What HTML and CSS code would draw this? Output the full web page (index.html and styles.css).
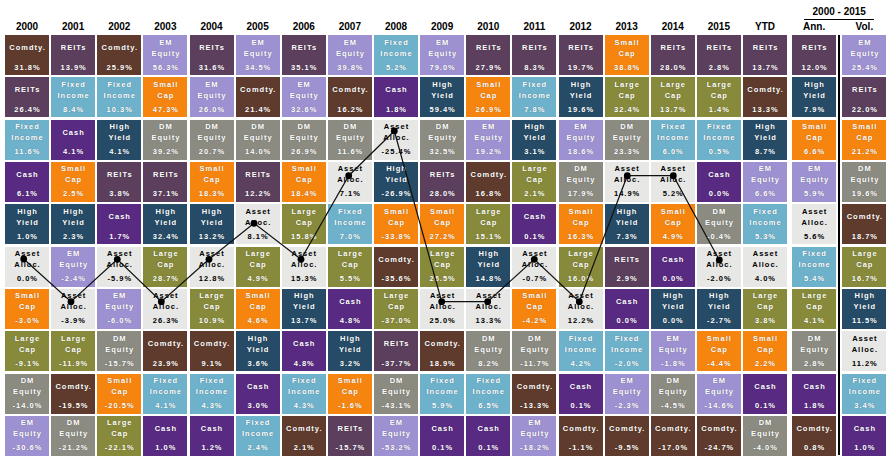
FILE: index.html
```html
<!DOCTYPE html>
<html>
<head>
<meta charset="utf-8">
<link rel="stylesheet" href="styles.css">
</head>
<body>
<div class="page">
  <div class="col"><div class="yr">2000</div>
    <div class="cell cm"><div class="lbl"><span>Comdty.</span></div><div class="pct">31.8%</div></div>
    <div class="cell re"><div class="lbl"><span>REITs</span></div><div class="pct">26.4%</div></div>
    <div class="cell fi"><div class="lbl"><span>Fixed<br>Income</span></div><div class="pct">11.6%</div></div>
    <div class="cell ca"><div class="lbl"><span>Cash</span></div><div class="pct">6.1%</div></div>
    <div class="cell hy"><div class="lbl"><span>High<br>Yield</span></div><div class="pct">1.0%</div></div>
    <div class="cell aa"><div class="lbl"><span>Asset<br>Alloc.</span></div><div class="pct">0.0%</div></div>
    <div class="cell sc"><div class="lbl"><span>Small<br>Cap</span></div><div class="pct">-3.0%</div></div>
    <div class="cell lc"><div class="lbl"><span>Large<br>Cap</span></div><div class="pct">-9.1%</div></div>
    <div class="cell dm"><div class="lbl"><span>DM<br>Equity</span></div><div class="pct">-14.0%</div></div>
    <div class="cell em"><div class="lbl"><span>EM<br>Equity</span></div><div class="pct">-30.6%</div></div>
  </div>
  <div class="col"><div class="yr">2001</div>
    <div class="cell re"><div class="lbl"><span>REITs</span></div><div class="pct">13.9%</div></div>
    <div class="cell fi"><div class="lbl"><span>Fixed<br>Income</span></div><div class="pct">8.4%</div></div>
    <div class="cell ca"><div class="lbl"><span>Cash</span></div><div class="pct">4.1%</div></div>
    <div class="cell sc"><div class="lbl"><span>Small<br>Cap</span></div><div class="pct">2.5%</div></div>
    <div class="cell hy"><div class="lbl"><span>High<br>Yield</span></div><div class="pct">2.3%</div></div>
    <div class="cell em"><div class="lbl"><span>EM<br>Equity</span></div><div class="pct">-2.4%</div></div>
    <div class="cell aa"><div class="lbl"><span>Asset<br>Alloc.</span></div><div class="pct">-3.9%</div></div>
    <div class="cell lc"><div class="lbl"><span>Large<br>Cap</span></div><div class="pct">-11.9%</div></div>
    <div class="cell cm"><div class="lbl"><span>Comdty.</span></div><div class="pct">-19.5%</div></div>
    <div class="cell dm"><div class="lbl"><span>DM<br>Equity</span></div><div class="pct">-21.2%</div></div>
  </div>
  <div class="col"><div class="yr">2002</div>
    <div class="cell cm"><div class="lbl"><span>Comdty.</span></div><div class="pct">25.9%</div></div>
    <div class="cell fi"><div class="lbl"><span>Fixed<br>Income</span></div><div class="pct">10.3%</div></div>
    <div class="cell hy"><div class="lbl"><span>High<br>Yield</span></div><div class="pct">4.1%</div></div>
    <div class="cell re"><div class="lbl"><span>REITs</span></div><div class="pct">3.8%</div></div>
    <div class="cell ca"><div class="lbl"><span>Cash</span></div><div class="pct">1.7%</div></div>
    <div class="cell aa"><div class="lbl"><span>Asset<br>Alloc.</span></div><div class="pct">-5.9%</div></div>
    <div class="cell em"><div class="lbl"><span>EM<br>Equity</span></div><div class="pct">-6.0%</div></div>
    <div class="cell dm"><div class="lbl"><span>DM<br>Equity</span></div><div class="pct">-15.7%</div></div>
    <div class="cell sc"><div class="lbl"><span>Small<br>Cap</span></div><div class="pct">-20.5%</div></div>
    <div class="cell lc"><div class="lbl"><span>Large<br>Cap</span></div><div class="pct">-22.1%</div></div>
  </div>
  <div class="col"><div class="yr">2003</div>
    <div class="cell em"><div class="lbl"><span>EM<br>Equity</span></div><div class="pct">56.3%</div></div>
    <div class="cell sc"><div class="lbl"><span>Small<br>Cap</span></div><div class="pct">47.3%</div></div>
    <div class="cell dm"><div class="lbl"><span>DM<br>Equity</span></div><div class="pct">39.2%</div></div>
    <div class="cell re"><div class="lbl"><span>REITs</span></div><div class="pct">37.1%</div></div>
    <div class="cell hy"><div class="lbl"><span>High<br>Yield</span></div><div class="pct">32.4%</div></div>
    <div class="cell lc"><div class="lbl"><span>Large<br>Cap</span></div><div class="pct">28.7%</div></div>
    <div class="cell aa"><div class="lbl"><span>Asset<br>Alloc.</span></div><div class="pct">26.3%</div></div>
    <div class="cell cm"><div class="lbl"><span>Comdty.</span></div><div class="pct">23.9%</div></div>
    <div class="cell fi"><div class="lbl"><span>Fixed<br>Income</span></div><div class="pct">4.1%</div></div>
    <div class="cell ca"><div class="lbl"><span>Cash</span></div><div class="pct">1.0%</div></div>
  </div>
  <div class="col"><div class="yr">2004</div>
    <div class="cell re"><div class="lbl"><span>REITs</span></div><div class="pct">31.6%</div></div>
    <div class="cell em"><div class="lbl"><span>EM<br>Equity</span></div><div class="pct">26.0%</div></div>
    <div class="cell dm"><div class="lbl"><span>DM<br>Equity</span></div><div class="pct">20.7%</div></div>
    <div class="cell sc"><div class="lbl"><span>Small<br>Cap</span></div><div class="pct">18.3%</div></div>
    <div class="cell hy"><div class="lbl"><span>High<br>Yield</span></div><div class="pct">13.2%</div></div>
    <div class="cell aa"><div class="lbl"><span>Asset<br>Alloc.</span></div><div class="pct">12.8%</div></div>
    <div class="cell lc"><div class="lbl"><span>Large<br>Cap</span></div><div class="pct">10.9%</div></div>
    <div class="cell cm"><div class="lbl"><span>Comdty.</span></div><div class="pct">9.1%</div></div>
    <div class="cell fi"><div class="lbl"><span>Fixed<br>Income</span></div><div class="pct">4.3%</div></div>
    <div class="cell ca"><div class="lbl"><span>Cash</span></div><div class="pct">1.2%</div></div>
  </div>
  <div class="col"><div class="yr">2005</div>
    <div class="cell em"><div class="lbl"><span>EM<br>Equity</span></div><div class="pct">34.5%</div></div>
    <div class="cell cm"><div class="lbl"><span>Comdty.</span></div><div class="pct">21.4%</div></div>
    <div class="cell dm"><div class="lbl"><span>DM<br>Equity</span></div><div class="pct">14.0%</div></div>
    <div class="cell re"><div class="lbl"><span>REITs</span></div><div class="pct">12.2%</div></div>
    <div class="cell aa"><div class="lbl"><span>Asset<br>Alloc.</span></div><div class="pct">8.1%</div></div>
    <div class="cell lc"><div class="lbl"><span>Large<br>Cap</span></div><div class="pct">4.9%</div></div>
    <div class="cell sc"><div class="lbl"><span>Small<br>Cap</span></div><div class="pct">4.6%</div></div>
    <div class="cell hy"><div class="lbl"><span>High<br>Yield</span></div><div class="pct">3.6%</div></div>
    <div class="cell ca"><div class="lbl"><span>Cash</span></div><div class="pct">3.0%</div></div>
    <div class="cell fi"><div class="lbl"><span>Fixed<br>Income</span></div><div class="pct">2.4%</div></div>
  </div>
  <div class="col"><div class="yr">2006</div>
    <div class="cell re"><div class="lbl"><span>REITs</span></div><div class="pct">35.1%</div></div>
    <div class="cell em"><div class="lbl"><span>EM<br>Equity</span></div><div class="pct">32.6%</div></div>
    <div class="cell dm"><div class="lbl"><span>DM<br>Equity</span></div><div class="pct">26.9%</div></div>
    <div class="cell sc"><div class="lbl"><span>Small<br>Cap</span></div><div class="pct">18.4%</div></div>
    <div class="cell lc"><div class="lbl"><span>Large<br>Cap</span></div><div class="pct">15.8%</div></div>
    <div class="cell aa"><div class="lbl"><span>Asset<br>Alloc.</span></div><div class="pct">15.3%</div></div>
    <div class="cell hy"><div class="lbl"><span>High<br>Yield</span></div><div class="pct">13.7%</div></div>
    <div class="cell ca"><div class="lbl"><span>Cash</span></div><div class="pct">4.8%</div></div>
    <div class="cell fi"><div class="lbl"><span>Fixed<br>Income</span></div><div class="pct">4.3%</div></div>
    <div class="cell cm"><div class="lbl"><span>Comdty.</span></div><div class="pct">2.1%</div></div>
  </div>
  <div class="col"><div class="yr">2007</div>
    <div class="cell em"><div class="lbl"><span>EM<br>Equity</span></div><div class="pct">39.8%</div></div>
    <div class="cell cm"><div class="lbl"><span>Comdty.</span></div><div class="pct">16.2%</div></div>
    <div class="cell dm"><div class="lbl"><span>DM<br>Equity</span></div><div class="pct">11.6%</div></div>
    <div class="cell aa"><div class="lbl"><span>Asset<br>Alloc.</span></div><div class="pct">7.1%</div></div>
    <div class="cell fi"><div class="lbl"><span>Fixed<br>Income</span></div><div class="pct">7.0%</div></div>
    <div class="cell lc"><div class="lbl"><span>Large<br>Cap</span></div><div class="pct">5.5%</div></div>
    <div class="cell ca"><div class="lbl"><span>Cash</span></div><div class="pct">4.8%</div></div>
    <div class="cell hy"><div class="lbl"><span>High<br>Yield</span></div><div class="pct">3.2%</div></div>
    <div class="cell sc"><div class="lbl"><span>Small<br>Cap</span></div><div class="pct">-1.6%</div></div>
    <div class="cell re"><div class="lbl"><span>REITs</span></div><div class="pct">-15.7%</div></div>
  </div>
  <div class="col"><div class="yr">2008</div>
    <div class="cell fi"><div class="lbl"><span>Fixed<br>Income</span></div><div class="pct">5.2%</div></div>
    <div class="cell ca"><div class="lbl"><span>Cash</span></div><div class="pct">1.8%</div></div>
    <div class="cell aa"><div class="lbl"><span>Asset<br>Alloc.</span></div><div class="pct">-25.4%</div></div>
    <div class="cell hy"><div class="lbl"><span>High<br>Yield</span></div><div class="pct">-26.9%</div></div>
    <div class="cell sc"><div class="lbl"><span>Small<br>Cap</span></div><div class="pct">-33.8%</div></div>
    <div class="cell cm"><div class="lbl"><span>Comdty.</span></div><div class="pct">-35.6%</div></div>
    <div class="cell lc"><div class="lbl"><span>Large<br>Cap</span></div><div class="pct">-37.0%</div></div>
    <div class="cell re"><div class="lbl"><span>REITs</span></div><div class="pct">-37.7%</div></div>
    <div class="cell dm"><div class="lbl"><span>DM<br>Equity</span></div><div class="pct">-43.1%</div></div>
    <div class="cell em"><div class="lbl"><span>EM<br>Equity</span></div><div class="pct">-53.2%</div></div>
  </div>
  <div class="col"><div class="yr">2009</div>
    <div class="cell em"><div class="lbl"><span>EM<br>Equity</span></div><div class="pct">79.0%</div></div>
    <div class="cell hy"><div class="lbl"><span>High<br>Yield</span></div><div class="pct">59.4%</div></div>
    <div class="cell dm"><div class="lbl"><span>DM<br>Equity</span></div><div class="pct">32.5%</div></div>
    <div class="cell re"><div class="lbl"><span>REITs</span></div><div class="pct">28.0%</div></div>
    <div class="cell sc"><div class="lbl"><span>Small<br>Cap</span></div><div class="pct">27.2%</div></div>
    <div class="cell lc"><div class="lbl"><span>Large<br>Cap</span></div><div class="pct">26.5%</div></div>
    <div class="cell aa"><div class="lbl"><span>Asset<br>Alloc.</span></div><div class="pct">25.0%</div></div>
    <div class="cell cm"><div class="lbl"><span>Comdty.</span></div><div class="pct">18.9%</div></div>
    <div class="cell fi"><div class="lbl"><span>Fixed<br>Income</span></div><div class="pct">5.9%</div></div>
    <div class="cell ca"><div class="lbl"><span>Cash</span></div><div class="pct">0.1%</div></div>
  </div>
  <div class="col"><div class="yr">2010</div>
    <div class="cell re"><div class="lbl"><span>REITs</span></div><div class="pct">27.9%</div></div>
    <div class="cell sc"><div class="lbl"><span>Small<br>Cap</span></div><div class="pct">26.9%</div></div>
    <div class="cell em"><div class="lbl"><span>EM<br>Equity</span></div><div class="pct">19.2%</div></div>
    <div class="cell cm"><div class="lbl"><span>Comdty.</span></div><div class="pct">16.8%</div></div>
    <div class="cell lc"><div class="lbl"><span>Large<br>Cap</span></div><div class="pct">15.1%</div></div>
    <div class="cell hy"><div class="lbl"><span>High<br>Yield</span></div><div class="pct">14.8%</div></div>
    <div class="cell aa"><div class="lbl"><span>Asset<br>Alloc.</span></div><div class="pct">13.3%</div></div>
    <div class="cell dm"><div class="lbl"><span>DM<br>Equity</span></div><div class="pct">8.2%</div></div>
    <div class="cell fi"><div class="lbl"><span>Fixed<br>Income</span></div><div class="pct">6.5%</div></div>
    <div class="cell ca"><div class="lbl"><span>Cash</span></div><div class="pct">0.1%</div></div>
  </div>
  <div class="col"><div class="yr">2011</div>
    <div class="cell re"><div class="lbl"><span>REITs</span></div><div class="pct">8.3%</div></div>
    <div class="cell fi"><div class="lbl"><span>Fixed<br>Income</span></div><div class="pct">7.8%</div></div>
    <div class="cell hy"><div class="lbl"><span>High<br>Yield</span></div><div class="pct">3.1%</div></div>
    <div class="cell lc"><div class="lbl"><span>Large<br>Cap</span></div><div class="pct">2.1%</div></div>
    <div class="cell ca"><div class="lbl"><span>Cash</span></div><div class="pct">0.1%</div></div>
    <div class="cell aa"><div class="lbl"><span>Asset<br>Alloc.</span></div><div class="pct">-0.7%</div></div>
    <div class="cell sc"><div class="lbl"><span>Small<br>Cap</span></div><div class="pct">-4.2%</div></div>
    <div class="cell dm"><div class="lbl"><span>DM<br>Equity</span></div><div class="pct">-11.7%</div></div>
    <div class="cell cm"><div class="lbl"><span>Comdty.</span></div><div class="pct">-13.3%</div></div>
    <div class="cell em"><div class="lbl"><span>EM<br>Equity</span></div><div class="pct">-18.2%</div></div>
  </div>
  <div class="col"><div class="yr">2012</div>
    <div class="cell re"><div class="lbl"><span>REITs</span></div><div class="pct">19.7%</div></div>
    <div class="cell hy"><div class="lbl"><span>High<br>Yield</span></div><div class="pct">19.6%</div></div>
    <div class="cell em"><div class="lbl"><span>EM<br>Equity</span></div><div class="pct">18.6%</div></div>
    <div class="cell dm"><div class="lbl"><span>DM<br>Equity</span></div><div class="pct">17.9%</div></div>
    <div class="cell sc"><div class="lbl"><span>Small<br>Cap</span></div><div class="pct">16.3%</div></div>
    <div class="cell lc"><div class="lbl"><span>Large<br>Cap</span></div><div class="pct">16.0%</div></div>
    <div class="cell aa"><div class="lbl"><span>Asset<br>Alloc.</span></div><div class="pct">12.2%</div></div>
    <div class="cell fi"><div class="lbl"><span>Fixed<br>Income</span></div><div class="pct">4.2%</div></div>
    <div class="cell ca"><div class="lbl"><span>Cash</span></div><div class="pct">0.1%</div></div>
    <div class="cell cm"><div class="lbl"><span>Comdty.</span></div><div class="pct">-1.1%</div></div>
  </div>
  <div class="col"><div class="yr">2013</div>
    <div class="cell sc"><div class="lbl"><span>Small<br>Cap</span></div><div class="pct">38.8%</div></div>
    <div class="cell lc"><div class="lbl"><span>Large<br>Cap</span></div><div class="pct">32.4%</div></div>
    <div class="cell dm"><div class="lbl"><span>DM<br>Equity</span></div><div class="pct">23.3%</div></div>
    <div class="cell aa"><div class="lbl"><span>Asset<br>Alloc.</span></div><div class="pct">14.9%</div></div>
    <div class="cell hy"><div class="lbl"><span>High<br>Yield</span></div><div class="pct">7.3%</div></div>
    <div class="cell re"><div class="lbl"><span>REITs</span></div><div class="pct">2.9%</div></div>
    <div class="cell ca"><div class="lbl"><span>Cash</span></div><div class="pct">0.0%</div></div>
    <div class="cell fi"><div class="lbl"><span>Fixed<br>Income</span></div><div class="pct">-2.0%</div></div>
    <div class="cell em"><div class="lbl"><span>EM<br>Equity</span></div><div class="pct">-2.3%</div></div>
    <div class="cell cm"><div class="lbl"><span>Comdty.</span></div><div class="pct">-9.5%</div></div>
  </div>
  <div class="col"><div class="yr">2014</div>
    <div class="cell re"><div class="lbl"><span>REITs</span></div><div class="pct">28.0%</div></div>
    <div class="cell lc"><div class="lbl"><span>Large<br>Cap</span></div><div class="pct">13.7%</div></div>
    <div class="cell fi"><div class="lbl"><span>Fixed<br>Income</span></div><div class="pct">6.0%</div></div>
    <div class="cell aa"><div class="lbl"><span>Asset<br>Alloc.</span></div><div class="pct">5.2%</div></div>
    <div class="cell sc"><div class="lbl"><span>Small<br>Cap</span></div><div class="pct">4.9%</div></div>
    <div class="cell ca"><div class="lbl"><span>Cash</span></div><div class="pct">0.0%</div></div>
    <div class="cell hy"><div class="lbl"><span>High<br>Yield</span></div><div class="pct">0.0%</div></div>
    <div class="cell em"><div class="lbl"><span>EM<br>Equity</span></div><div class="pct">-1.8%</div></div>
    <div class="cell dm"><div class="lbl"><span>DM<br>Equity</span></div><div class="pct">-4.5%</div></div>
    <div class="cell cm"><div class="lbl"><span>Comdty.</span></div><div class="pct">-17.0%</div></div>
  </div>
  <div class="col"><div class="yr">2015</div>
    <div class="cell re"><div class="lbl"><span>REITs</span></div><div class="pct">2.8%</div></div>
    <div class="cell lc"><div class="lbl"><span>Large<br>Cap</span></div><div class="pct">1.4%</div></div>
    <div class="cell fi"><div class="lbl"><span>Fixed<br>Income</span></div><div class="pct">0.5%</div></div>
    <div class="cell ca"><div class="lbl"><span>Cash</span></div><div class="pct">0.0%</div></div>
    <div class="cell dm"><div class="lbl"><span>DM<br>Equity</span></div><div class="pct">-0.4%</div></div>
    <div class="cell aa"><div class="lbl"><span>Asset<br>Alloc.</span></div><div class="pct">-2.0%</div></div>
    <div class="cell hy"><div class="lbl"><span>High<br>Yield</span></div><div class="pct">-2.7%</div></div>
    <div class="cell sc"><div class="lbl"><span>Small<br>Cap</span></div><div class="pct">-4.4%</div></div>
    <div class="cell em"><div class="lbl"><span>EM<br>Equity</span></div><div class="pct">-14.6%</div></div>
    <div class="cell cm"><div class="lbl"><span>Comdty.</span></div><div class="pct">-24.7%</div></div>
  </div>
  <div class="col"><div class="yr">YTD</div>
    <div class="cell re"><div class="lbl"><span>REITs</span></div><div class="pct">13.7%</div></div>
    <div class="cell cm"><div class="lbl"><span>Comdty.</span></div><div class="pct">13.3%</div></div>
    <div class="cell hy"><div class="lbl"><span>High<br>Yield</span></div><div class="pct">8.7%</div></div>
    <div class="cell em"><div class="lbl"><span>EM<br>Equity</span></div><div class="pct">6.6%</div></div>
    <div class="cell fi"><div class="lbl"><span>Fixed<br>Income</span></div><div class="pct">5.3%</div></div>
    <div class="cell aa"><div class="lbl"><span>Asset<br>Alloc.</span></div><div class="pct">4.0%</div></div>
    <div class="cell lc"><div class="lbl"><span>Large<br>Cap</span></div><div class="pct">3.8%</div></div>
    <div class="cell sc"><div class="lbl"><span>Small<br>Cap</span></div><div class="pct">2.2%</div></div>
    <div class="cell ca"><div class="lbl"><span>Cash</span></div><div class="pct">0.1%</div></div>
    <div class="cell dm"><div class="lbl"><span>DM<br>Equity</span></div><div class="pct">-4.0%</div></div>
  </div>
  <div class="group">
    <div class="ttl">2000 - 2015</div>
    <div class="gcols">
      <div class="col"><div class="yr short">Ann.</div>
        <div class="cell re"><div class="lbl"><span>REITs</span></div><div class="pct">12.0%</div></div>
        <div class="cell hy"><div class="lbl"><span>High<br>Yield</span></div><div class="pct">7.9%</div></div>
        <div class="cell sc"><div class="lbl"><span>Small<br>Cap</span></div><div class="pct">6.6%</div></div>
        <div class="cell em"><div class="lbl"><span>EM<br>Equity</span></div><div class="pct">5.9%</div></div>
        <div class="cell aa"><div class="lbl"><span>Asset<br>Alloc.</span></div><div class="pct">5.6%</div></div>
        <div class="cell fi"><div class="lbl"><span>Fixed<br>Income</span></div><div class="pct">5.4%</div></div>
        <div class="cell lc"><div class="lbl"><span>Large<br>Cap</span></div><div class="pct">4.1%</div></div>
        <div class="cell dm"><div class="lbl"><span>DM<br>Equity</span></div><div class="pct">2.8%</div></div>
        <div class="cell ca"><div class="lbl"><span>Cash</span></div><div class="pct">1.8%</div></div>
        <div class="cell cm"><div class="lbl"><span>Comdty.</span></div><div class="pct">0.8%</div></div>
      </div>
      <div class="sep"></div>
      <div class="col"><div class="yr short">Vol.</div>
        <div class="cell em"><div class="lbl"><span>EM<br>Equity</span></div><div class="pct">25.4%</div></div>
        <div class="cell re"><div class="lbl"><span>REITs</span></div><div class="pct">22.0%</div></div>
        <div class="cell sc"><div class="lbl"><span>Small<br>Cap</span></div><div class="pct">21.2%</div></div>
        <div class="cell dm"><div class="lbl"><span>DM<br>Equity</span></div><div class="pct">19.6%</div></div>
        <div class="cell cm"><div class="lbl"><span>Comdty.</span></div><div class="pct">18.7%</div></div>
        <div class="cell lc"><div class="lbl"><span>Large<br>Cap</span></div><div class="pct">16.7%</div></div>
        <div class="cell hy"><div class="lbl"><span>High<br>Yield</span></div><div class="pct">11.5%</div></div>
        <div class="cell aa"><div class="lbl"><span>Asset<br>Alloc.</span></div><div class="pct">11.2%</div></div>
        <div class="cell fi"><div class="lbl"><span>Fixed<br>Income</span></div><div class="pct">3.4%</div></div>
        <div class="cell ca"><div class="lbl"><span>Cash</span></div><div class="pct">1.0%</div></div>
      </div>
    </div>
  </div>
  <svg class="trend" width="894" height="466" viewBox="0 0 894 466">
    <polyline class="trend-line" points="23.7,259 71,301.7 117.3,259.3 161.3,301.7 209,259.3 254,223.3 301,259.3 348.7,175.7 394.3,131 441.7,301.7 487.7,301.7 534.3,259.3 579.3,301.7 627.3,175.7 673.3,175.7 719.3,260"/>
    <g class="trend-dots">
      <circle cx="23.7" cy="259" r="3.4"/>
      <circle cx="71" cy="301.7" r="3.4"/>
      <circle cx="117.3" cy="259.3" r="3.4"/>
      <circle cx="161.3" cy="301.7" r="3.4"/>
      <circle cx="209" cy="259.3" r="3.4"/>
      <circle cx="254" cy="223.3" r="3.4"/>
      <circle cx="301" cy="259.3" r="3.4"/>
      <circle cx="348.7" cy="175.7" r="3.4"/>
      <circle cx="394.3" cy="131" r="3.4"/>
      <circle cx="441.7" cy="301.7" r="3.4"/>
      <circle cx="487.7" cy="301.7" r="3.4"/>
      <circle cx="534.3" cy="259.3" r="3.4"/>
      <circle cx="579.3" cy="301.7" r="3.4"/>
      <circle cx="627.3" cy="175.7" r="3.4"/>
      <circle cx="673.3" cy="175.7" r="3.4"/>
      <circle cx="719.3" cy="260" r="3.4"/>
    </g>
  </svg>
</div>
</body>
</html>
```
FILE: styles.css
```css
html, body {
  margin: 0;
  padding: 0;
  background: #ffffff;
}
body {
  font-family: "Liberation Sans", Arial, sans-serif;
}
.page {
  position: relative;
  display: flex;
  gap: 2.125px;
  padding-left: 5px;
  width: 894px;
  height: 466px;
  box-sizing: border-box;
}
.col {
  display: flex;
  flex-direction: column;
  gap: 2.33px;
  width: 44px;
}
.yr {
  height: 35px;
  margin-bottom: -2.33px;
  display: flex;
  align-items: flex-end;
  justify-content: center;
  box-sizing: border-box;
  padding-bottom: 2px;
  font-size: 10px;
  line-height: 12px;
  font-weight: bold;
  color: #000;
}
.yr.short {
  height: 15px;
}
.group {
  display: flex;
  flex-direction: column;
  margin-left: 3px;
}
.ttl {
  align-self: center;
  width: 70px;
  height: 20px;
  box-sizing: border-box;
  padding-top: 6px;
  border-bottom: 1px solid #000;
  text-align: center;
  font-size: 10px;
  line-height: 12px;
  font-weight: bold;
  color: #000;
}
.gcols {
  display: flex;
  gap: 2.125px;
}
.sep {
  width: 2px;
  margin-top: 15px;
  height: 420px;
  background: #000;
}
.cell {
  width: 44px;
  height: 40px;
  box-sizing: border-box;
  padding-top: 1.5px;
  padding-left: 1px;
  display: flex;
  flex-direction: column;
  align-items: center;
  color: #fff;
  font-size: 7.5px;
  line-height: 11px;
  font-weight: bold;
  letter-spacing: 1px;
  text-align: center;
  text-shadow: 0 0 1px rgba(0, 0, 0, 0.35);
}
.lbl {
  height: 22px;
  display: flex;
  align-items: center;
  justify-content: center;
}
.pct {
  margin-top: 3px;
}
.cm { background: #5e3b2c; }
.re { background: #5b3f5d; }
.em { background: #9e91d1; }
.fi { background: #6db1cb; }
.sc { background: #f6850f; }
.dm { background: #8b8b82; }
.hy { background: #254b66; }
.ca { background: #582a82; }
.lc { background: #878a3a; }
.aa {
  background: #e7e7e5;
  color: #000;
  text-shadow: none;
}
.trend {
  position: absolute;
  left: 0;
  top: 0;
  pointer-events: none;
}
.trend-line {
  fill: none;
  stroke: #111;
  stroke-width: 1.2;
}
.trend-dots circle {
  fill: #000;
}
```
